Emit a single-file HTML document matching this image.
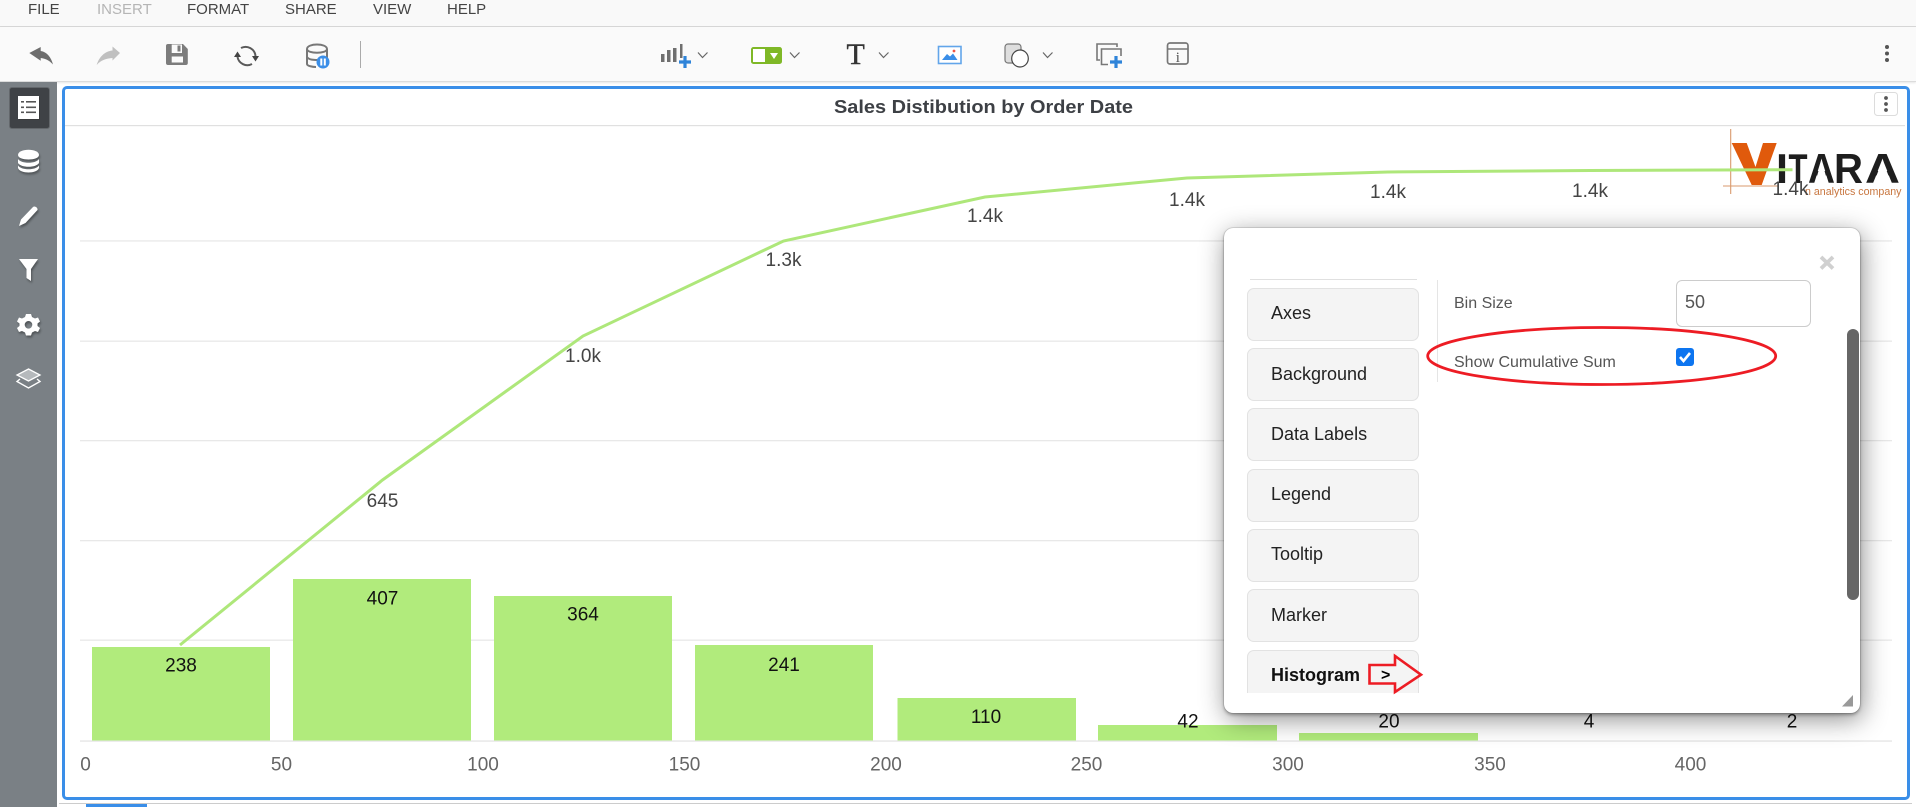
<!DOCTYPE html>
<html><head><meta charset="utf-8"><title>Sales Distribution</title>
<style>
html,body{margin:0;padding:0;width:1916px;height:807px;overflow:hidden;background:#fff;font-family:"Liberation Sans",Arial,sans-serif}
.a{position:absolute}
#menu{left:0;top:0;width:1916px;height:26px;background:#f9f9f9;border-bottom:1px solid #d8d8d8}
#menu span{position:absolute;top:1px;font-size:15px;line-height:17px;color:#444}
#tool{left:0;top:27px;width:1916px;height:54px;background:#fafafa;border-bottom:1px solid #dcdcdc;box-shadow:0 1px 2px rgba(0,0,0,.1)}
#side{left:0;top:82px;width:57px;height:725px;background:#7a8085}
#act{left:9px;top:87px;width:39px;height:40px;background:#3f4246;border:1px solid #63676b;border-radius:3px}
#frame{left:62px;top:86px;width:1842px;height:708px;border:3px solid #3a8ee8;border-radius:5px}
#dlg{left:1224px;top:228px;width:636px;height:485px;background:#fff;border-radius:9px;box-shadow:0 0 1px rgba(0,0,0,.6),0 2px 3px rgba(0,0,0,.3),2px 6px 26px rgba(0,0,0,.45)}
.b{position:absolute;left:1247px;width:170px;height:51px;background:#f4f4f4;border:1px solid #e2e2e2;border-radius:7px;font-size:18px;color:#222;line-height:49px;text-indent:23px}
#in{left:1676px;top:280px;width:133px;height:45px;border:1px solid #ccc;border-radius:6px;background:#fff;font-size:18px;color:#555;line-height:43px;text-indent:8px}
.l{position:absolute;left:1454px;font-size:16px;line-height:18px;color:#555}
svg{position:absolute;left:0;top:0}
svg text{font-family:"Liberation Sans",Arial,sans-serif}
</style></head><body>
<div class="a" id="menu">
<span style="left:28px">FILE</span><span style="left:97px;color:#b5b5b5">INSERT</span><span style="left:187px">FORMAT</span><span style="left:285px">SHARE</span><span style="left:373px">VIEW</span><span style="left:447px">HELP</span>
</div>
<div class="a" id="tool"></div>
<div class="a" id="side"></div>
<div class="a" id="act"></div>
<div class="a" id="frame"></div>
<div class="a" style="left:59px;top:803px;width:1853px;height:1px;background:#ccc"></div>
<div class="a" style="left:0;top:804px;width:1916px;height:3px;background:#f6f6f6;z-index:-1"></div>
<div class="a" style="left:86px;top:804px;width:61px;height:3px;background:#3a8ee8"></div>

<svg width="1916" height="807" viewBox="0 0 1916 807">
<!-- toolbar icons -->
<path d="M29.300 53 L40.700 47 V51 C47 52 51 57 53 64.500 C49 60 45 58.500 40.700 58 V60.700 Z" fill="#6e6e6e"/>
<path d="M120 53 L112.500 46.500 V50.500 C105 51 99 57 96.700 65 C101 60 106 58.500 112.500 58 V60.500 Z" fill="#c0c0c0"/>
<path fill-rule="evenodd" fill="#7c7c7c" d="M166 46 a2 2 0 0 1 2-2 H183 L187.800 49 V63 a2 2 0 0 1-2 2 H168 a2 2 0 0 1-2-2 Z M171.700 44.500 V53 H182 V44.500 Z M171.700 56.500 V62.500 H183 V56.500 Z"/>
<rect x="177.500" y="45.500" width="3" height="6" fill="#7c7c7c"/>
<path d="M241 48 A10 10 0 0 1 255.500 56 M252 64 A10 10 0 0 1 237.500 57" fill="none" stroke="#5a5a5a" stroke-width="2"/>
<path d="M252 56 H259 L255.500 61.500 Z M234 57 H241 L237.500 51.500 Z" fill="#444"/>
<path d="M307 49 C307 43 327 43 327 49 V58 M307 49 C307 54 327 54 327 49 M307 49 V64 C307 66 313 67 316 67" fill="none" stroke="#777" stroke-width="2"/>
<path d="M307 57 C309 60 314 60 318 60" fill="none" stroke="#777" stroke-width="2"/>
<circle cx="323" cy="62" r="6.500" fill="#3a8ee8"/><rect x="320.300" y="58.500" width="2" height="7" fill="#fff"/><rect x="323.800" y="58.500" width="2" height="7" fill="#fff"/>
<rect x="360" y="41" width="1" height="27" fill="#aaa"/>

<g fill="#6f6f6f"><rect x="661" y="54" width="3.500" height="8"/><rect x="667" y="50" width="3.500" height="12"/><rect x="673" y="48" width="3.500" height="14"/><rect x="680" y="44" width="2.500" height="14"/></g>
<path d="M685 56 V68 M679 62 H691" stroke="#2f84d9" stroke-width="3.200" fill="none"/>
<path d="M698 52.500 L702.500 57.500 L707.500 52.500" fill="none" stroke="#666" stroke-width="1.200"/>
<rect x="751.500" y="47.500" width="30" height="16" rx="2" fill="#7fb827" stroke="#7fb827"/>
<rect x="753" y="49" width="12" height="13" fill="#fff"/>
<path d="M770 53 H778 L774 59 Z" fill="#fff"/>
<path d="M790 52.500 L794.500 57.500 L799.500 52.500" fill="none" stroke="#666" stroke-width="1.200"/>
<text x="846.500" y="64" font-size="30" fill="#333" stroke="#333" stroke-width=".4" style="font-family:'Liberation Serif',serif">T</text>
<path d="M879 52.500 L883.500 57.500 L888.500 52.500" fill="none" stroke="#666" stroke-width="1.200"/>
<rect x="938.500" y="46.500" width="22.500" height="17" fill="#fff" stroke="#62a5ea" stroke-width="1.600"/>
<path d="M942 60 L947 54 L950 56.500 L953 53.500 L957.500 60 Z" fill="#3a8ee8"/><circle cx="954" cy="51" r="1.400" fill="#ee5544"/>
<rect x="1005" y="44" width="16" height="19" rx="3" fill="#dedede" stroke="#777" stroke-width="1.200"/>
<ellipse cx="1020" cy="58.500" rx="8.300" ry="8.500" fill="#fff" stroke="#444" stroke-width="1.200"/>
<path d="M1043 52.500 L1047.500 57.500 L1052.500 52.500" fill="none" stroke="#666" stroke-width="1.200"/>
<path d="M1100 60 H1097 V44 H1117 V47" fill="none" stroke="#777" stroke-width="1.600"/>
<path d="M1108 64.500 H1101.500 V49 H1121 V56" fill="none" stroke="#777" stroke-width="1.600"/>
<path d="M1116 56 V68 M1110 62 H1122" stroke="#2f84d9" stroke-width="3.200" fill="none"/>
<rect x="1167.500" y="43" width="20.500" height="21" rx="2.500" fill="none" stroke="#777" stroke-width="1.700"/>
<path d="M1168 49 H1188" stroke="#777" stroke-width="1.500"/>
<text x="1177.800" y="62" font-size="15" fill="#555" text-anchor="middle" style="font-family:'Liberation Serif',serif">i</text>
<g fill="#555"><circle cx="1887" cy="47" r="2"/><circle cx="1887" cy="53.500" r="2"/><circle cx="1887" cy="60" r="2"/></g>

<!-- sidebar icons -->
<rect x="19" y="97" width="21" height="23" fill="#333" opacity=".6"/>
<rect x="18" y="96" width="21" height="23" fill="#fff"/>
<g fill="#555"><rect x="21" y="101" width="3" height="1.600"/><rect x="21" y="106.500" width="3" height="1.600"/><rect x="21" y="111.500" width="3" height="1.600"/><rect x="26" y="101" width="10" height="1.600"/><rect x="26" y="106.500" width="10" height="1.600"/><rect x="26" y="111.500" width="10" height="1.600"/></g>
<g fill="#fff" style="filter:drop-shadow(1px 2px 1px rgba(0,0,0,.35))">
<path d="M18 155 C18 148 39 148 39 155 C39 161 18 161 18 155 Z"/>
<path d="M18 159 C21 164 36 164 39 159 V163 C36 168 21 168 18 163 Z"/>
<path d="M18 165.500 C21 170.500 36 170.500 39 165.500 V168 C37 174 20 174 18 168 Z"/>
<path d="M19 226 L21 219.500 L33 207 C35 205.500 38 208 37.500 210 L25.500 223 Z"/>
<path d="M19 259 H38 L31 269 V281 L26.500 278 V269 Z"/>
<path fill-rule="evenodd" d="M26 314 H31 L32 317 L35 318.500 L38 317.500 L40 321.500 L37.500 323.500 V326 L40 328 L38 332 L35 331 L32 332.500 L31 335.500 H26 L25 332.500 L22 331 L19 332 L17 328 L19.500 326 V323.500 L17 321.500 L19 317.500 L22 318.500 L25 317 Z M28.500 321 A3.800 3.800 0 1 0 28.501 328.600 A3.800 3.800 0 1 0 28.500 321 Z"/>
</g>
<path d="M28.500 369 L40 375 L28.500 381 L17 375 Z" fill="#b5b9bc" stroke="#fff" stroke-width="1.300"/>
<path d="M20 379 L17 381.500 L28.500 388 L40 381.500 L37 379" fill="none" stroke="#fff" stroke-width="1.400"/>

<!-- frame header -->
<rect x="65" y="125" width="1840" height="1.200" fill="#e0e0e0"/>
<text x="834" y="113" font-size="18" font-weight="700" fill="#3d4045" textLength="299" lengthAdjust="spacingAndGlyphs">Sales Distibution by Order Date</text>
<rect x="1874.500" y="92.500" width="23" height="23" rx="3" fill="#fff" stroke="#dcdcdc"/>
<g fill="#555"><circle cx="1886" cy="98" r="1.900"/><circle cx="1886" cy="104" r="1.900"/><circle cx="1886" cy="110" r="1.900"/></g>

<!-- grid -->
<g fill="#e8e8e8"><rect x="80" y="240.300" width="1812" height="1.300"/><rect x="80" y="340.500" width="1812" height="1.300"/><rect x="80" y="440" width="1812" height="1.300"/><rect x="80" y="540" width="1812" height="1.300"/><rect x="80" y="639.500" width="1812" height="1.300"/><rect x="80" y="740.300" width="1812" height="1.500"/></g>

<!-- logo -->
<path d="M1730.700 129 V194 M1723 186 H1778" stroke="#d99a6c" stroke-width="1.100" fill="none"/>
<path d="M1731.700 143 H1746.700 L1755.500 167 L1763 143 H1776.700 L1761.700 185 H1751.700 Z" fill="#e05a0c"/>
<g font-size="42" font-weight="700" fill="#1e1e1e">
<text x="1776" y="183" textLength="12" lengthAdjust="spacingAndGlyphs">I</text>
<text x="1788.500" y="183" textLength="19" lengthAdjust="spacingAndGlyphs">T</text>
<text x="1808" y="183" textLength="27" lengthAdjust="spacingAndGlyphs">A</text>
<text x="1834" y="183" textLength="29" lengthAdjust="spacingAndGlyphs">R</text>
<text x="1865" y="183" textLength="35" lengthAdjust="spacingAndGlyphs">A</text>
</g>
<path d="M1821.500 160 L1815 183.500 H1828 Z M1882.500 160 L1873.500 183.500 H1891.500 Z" fill="#fff"/>
<text x="1805" y="195" font-size="11" fill="#c8763f" textLength="96.500" lengthAdjust="spacingAndGlyphs">n analytics company</text>

<!-- bars -->
<g fill="#b1eb7c">
<rect x="92" y="647" width="178" height="93.500"/>
<rect x="293" y="579" width="178" height="161.500"/>
<rect x="494" y="596" width="178" height="144.500"/>
<rect x="695" y="645" width="178" height="95.500"/>
<rect x="897.500" y="698" width="178.500" height="42.500"/>
<rect x="1098" y="725" width="179" height="15.500"/>
<rect x="1299" y="733" width="179" height="7.500"/>
</g>
<polyline points="180,645 382.500,480 583,336 783.500,241 985,197 1187,178 1388,172 1590,170.500 1792.500,169.700" fill="none" stroke="#aee77a" stroke-width="3"/>

<g font-size="19" fill="#111" text-anchor="middle">
<text x="181" y="671.500">238</text><text x="382.500" y="604.500">407</text><text x="583" y="620.500">364</text><text x="784" y="671">241</text><text x="986" y="723">110</text><text x="1188" y="727.500">42</text><text x="1389" y="727.500">20</text><text x="1589" y="727.500">4</text><text x="1792" y="727.500">2</text>
</g>
<g font-size="19" fill="#444" text-anchor="middle">
<text x="382.500" y="507">645</text><text x="583" y="362">1.0k</text><text x="783.500" y="266">1.3k</text><text x="985" y="222">1.4k</text><text x="1187" y="206">1.4k</text><text x="1388" y="198">1.4k</text><text x="1590" y="197">1.4k</text><text x="1790.500" y="195">1.4k</text>
</g>
<g font-size="19" fill="#666" text-anchor="middle">
<text x="85.500" y="770.500">0</text><text x="281.500" y="770.500">50</text><text x="483" y="770.500">100</text><text x="684.500" y="770.500">150</text><text x="886" y="770.500">200</text><text x="1086.500" y="770.500">250</text><text x="1288" y="770.500">300</text><text x="1490" y="770.500">350</text><text x="1690.500" y="770.500">400</text>
</g>
</svg>

<div class="a" id="dlg"></div>
<div class="a" style="left:1250px;top:279px;width:167px;height:1px;background:#e0e0e0"></div>
<div class="b" style="top:288px">Axes</div>
<div class="b" style="top:348px;line-height:51px">Background</div>
<div class="b" style="top:408px;line-height:51px">Data Labels</div>
<div class="b" style="top:469px">Legend</div>
<div class="b" style="top:529px">Tooltip</div>
<div class="b" style="top:589px;line-height:51px">Marker</div>
<div class="b" style="top:650px;height:42px;border-bottom:0;border-radius:7px 7px 0 0;font-weight:700;color:#111">Histogram<span style="position:absolute;left:133px;top:0;text-indent:0;font-size:16px;color:#000">&gt;</span></div>
<div class="a" style="left:1437px;top:280px;width:1px;height:102px;background:#e5e5e5"></div>
<div class="l" style="top:295px">Bin Size</div>
<div class="l" style="top:354px">Show Cumulative Sum</div>
<div class="a" id="in">50</div>
<div class="a" style="left:1847px;top:329px;width:12px;height:271px;background:#666;border-radius:6px"></div>

<svg width="1916" height="807" viewBox="0 0 1916 807">
<rect x="1676" y="348" width="18" height="18" rx="3" fill="#0d75f0"/>
<path d="M1680 357 L1683.500 361 L1690 353" fill="none" stroke="#fff" stroke-width="2.600"/>
<path d="M1821 257 L1833 268.500 M1833 257 L1821 268.500" stroke="#d0d0d0" stroke-width="3.800" fill="none"/>
<path d="M1853 695 V706.500 H1842 Z" fill="#999"/>
<ellipse cx="1601.700" cy="356" rx="174" ry="28.500" fill="none" stroke="#ed1c24" stroke-width="2.800"/>
<path d="M1369.500 665 H1395 V656 L1421 674.700 L1395 692 V683.500 H1369.500 Z" fill="none" stroke="#ed1c24" stroke-width="2.600"/>
</svg>
</body></html>
